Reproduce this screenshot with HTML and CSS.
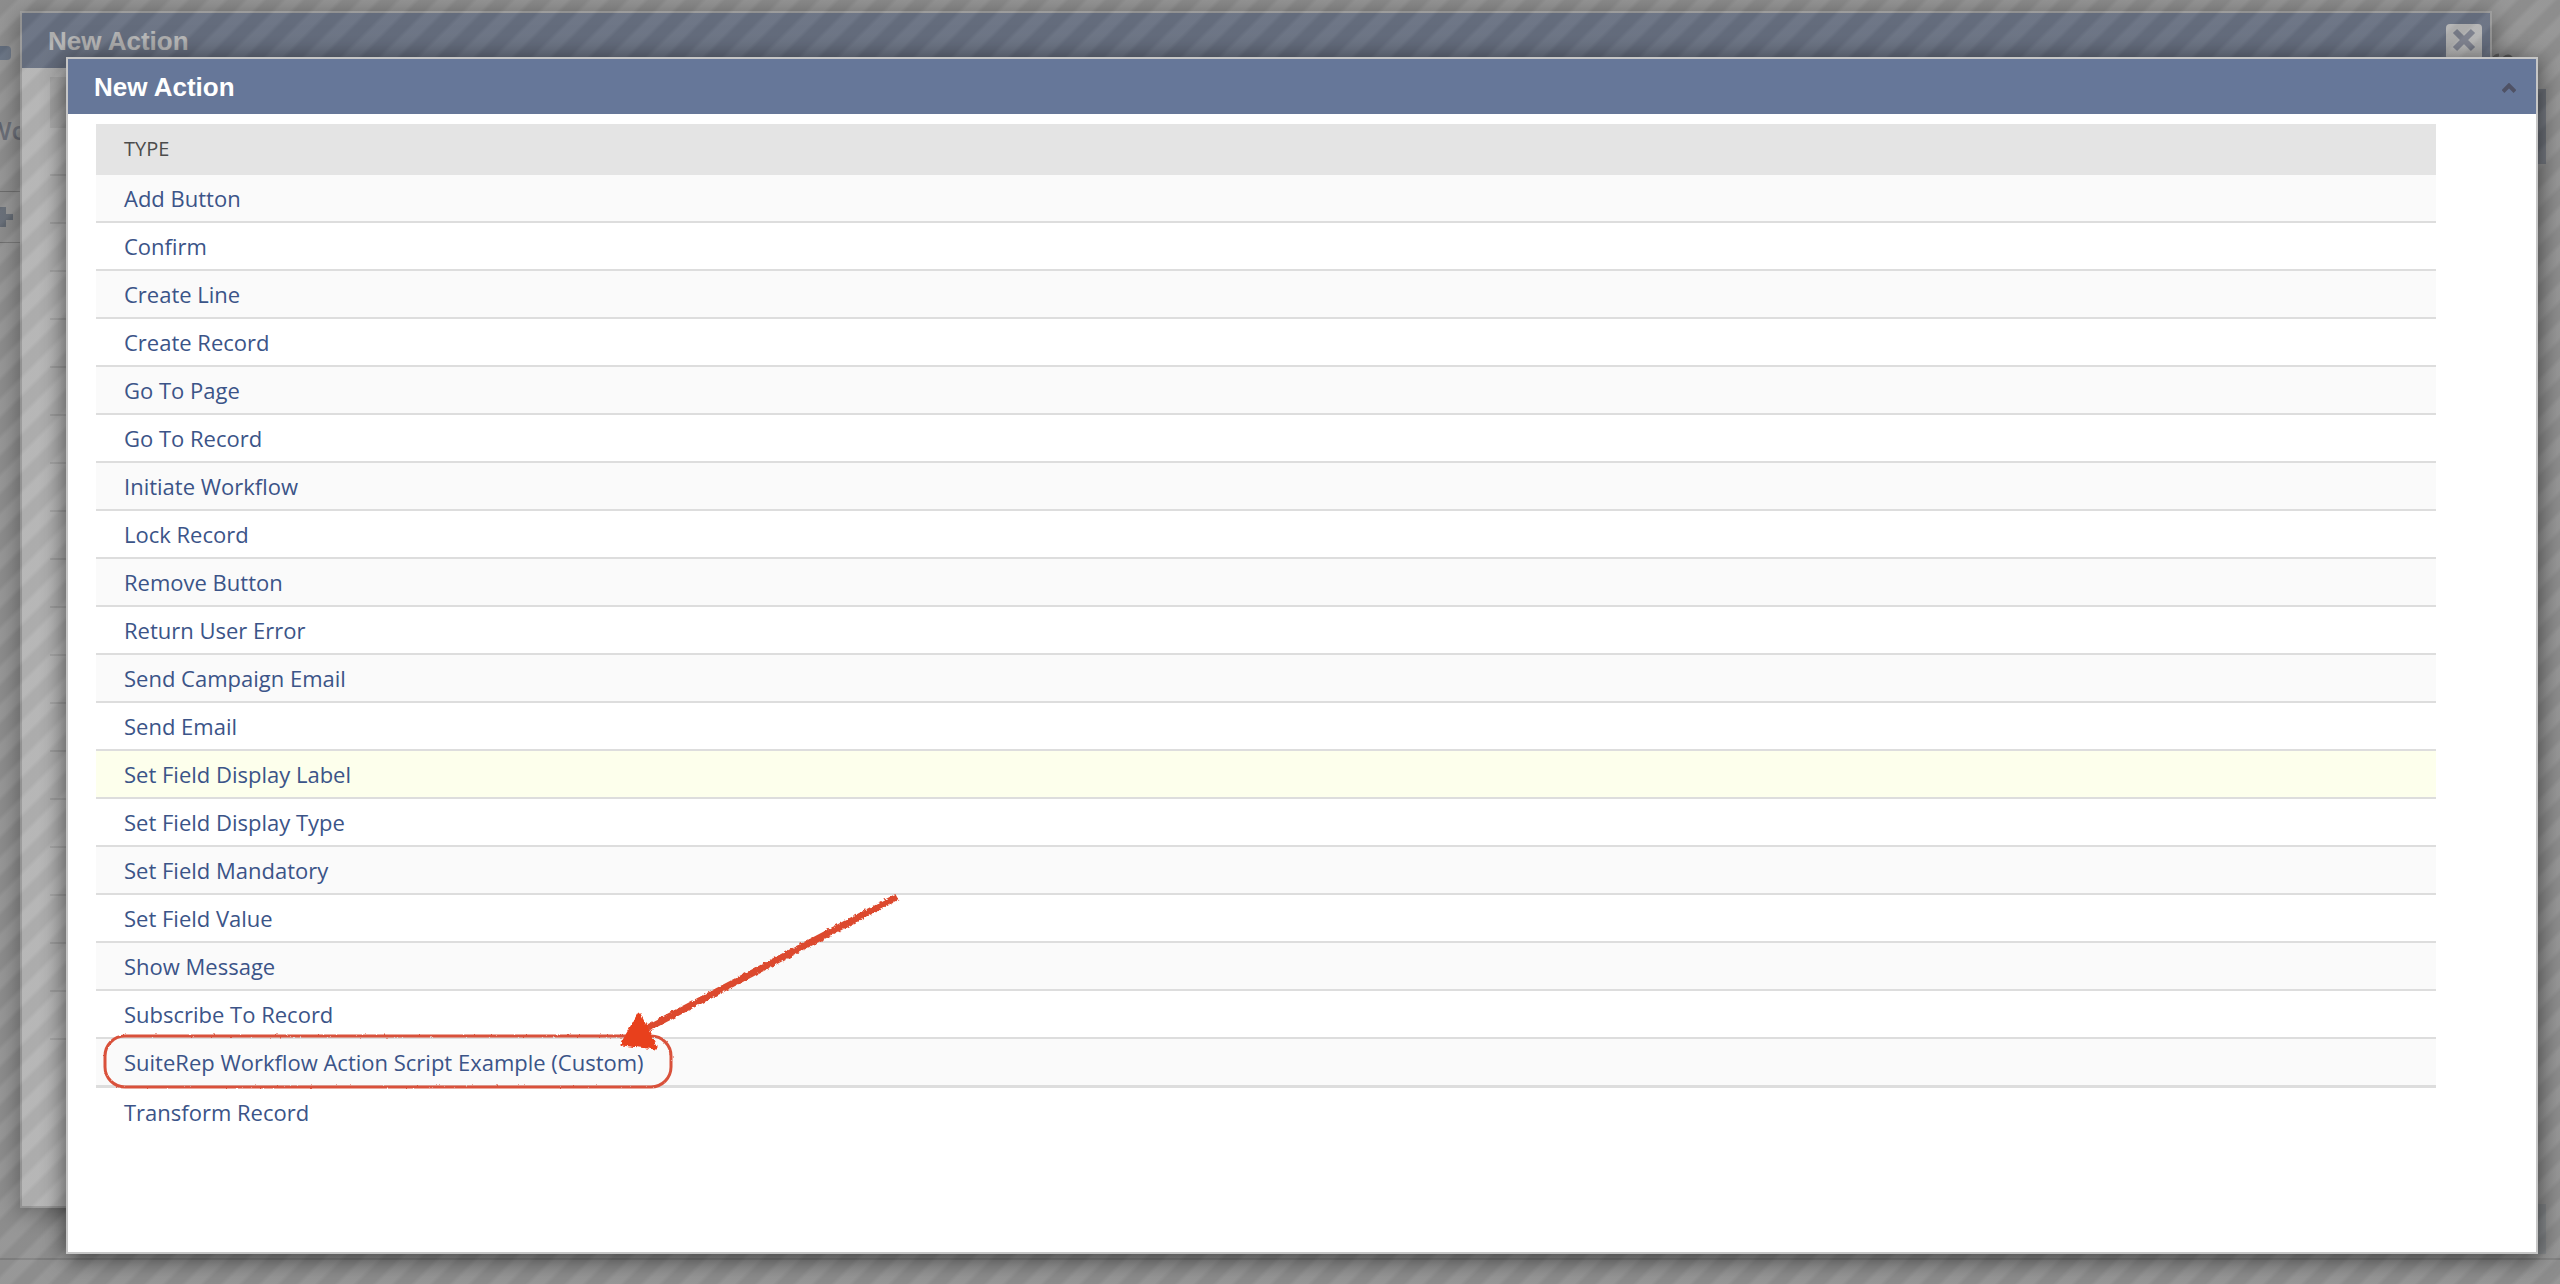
FILE: index.html
```html
<!DOCTYPE html>
<html lang="en">
<head>
    <meta charset="UTF-8">
    <meta name="viewport" content="width=device-width, initial-scale=1.0">
    <title>New Action</title>
    <link rel="stylesheet" href="styles.css">
</head>
<body>
    <!-- page behind the windows -->
    <div class="page">
        <button class="page-button" aria-label="Save"></button>
        <h1 class="page-title">Wo</h1>
        <div class="page-tab">
            <svg width="20" height="20" viewBox="0 0 20 20"><path d="M10 0V20M0 10H20" stroke="#5d6b7f" stroke-width="6"/></svg>
        </div>
        <svg class="page-more" width="20" height="10" viewBox="0 0 20 10"><path d="M1 9V3M1 5q2-3 5-3M9 9q2-6 6-6t4 6" fill="none" stroke="#555" stroke-width="3"/></svg>
        <div class="page-side"></div>
        <div class="page-side page-side-bottom"></div>
        <div class="page-foot"></div>
    </div>

    <div class="window window-back">
        <div class="window-header">
            <h2>New Action</h2>
            <button class="close" aria-label="Close">
                <svg width="24" height="24" viewBox="0 0 24 24"><path d="M3 3L21 21M21 3L3 21" stroke="#8b93ad" stroke-width="6"/></svg>
            </button>
        </div>
        <div class="ghost-list">
            <div class="ghost-head"></div>
            <div class="ghost-rows"></div>
        </div>
    </div>

    <div class="mask"></div>

    <div class="window window-front">
        <div class="window-header">
            <h2>New Action</h2>
            <button class="collapse" aria-label="Collapse">
                <svg width="14" height="10" viewBox="0 0 14 10"><path d="M1 8.500L7 2.500L13 8.500" fill="none" stroke="#4f5265" stroke-width="4"/></svg>
            </button>
        </div>
        <div class="window-body">
            <table class="action-list">
                <thead>
                    <tr><th>TYPE</th></tr>
                </thead>
                <tbody>
                    <tr><td><a href="#">Add Button</a></td></tr>
                    <tr><td><a href="#">Confirm</a></td></tr>
                    <tr><td><a href="#">Create Line</a></td></tr>
                    <tr><td><a href="#">Create Record</a></td></tr>
                    <tr><td><a href="#">Go To Page</a></td></tr>
                    <tr><td><a href="#">Go To Record</a></td></tr>
                    <tr><td><a href="#">Initiate Workflow</a></td></tr>
                    <tr><td><a href="#">Lock Record</a></td></tr>
                    <tr><td><a href="#">Remove Button</a></td></tr>
                    <tr><td><a href="#">Return User Error</a></td></tr>
                    <tr><td><a href="#">Send Campaign Email</a></td></tr>
                    <tr><td><a href="#">Send Email</a></td></tr>
                    <tr class="hover"><td><a href="#">Set Field Display Label</a></td></tr>
                    <tr><td><a href="#">Set Field Display Type</a></td></tr>
                    <tr><td><a href="#">Set Field Mandatory</a></td></tr>
                    <tr><td><a href="#">Set Field Value</a></td></tr>
                    <tr><td><a href="#">Show Message</a></td></tr>
                    <tr><td><a href="#">Subscribe To Record</a></td></tr>
                    <tr class="custom">
                        <td>
                            <a href="#">SuiteRep Workflow Action Script Example (Custom)</a>
                            <svg class="marker" width="820" height="200" viewBox="0 0 820 200">
                                <filter id="crayon" x="0" y="0" width="820" height="200" filterUnits="userSpaceOnUse">
                                    <feTurbulence type="fractalNoise" baseFrequency="0.3" numOctaves="2" seed="4"/>
                                    <feDisplacementMap in="SourceGraphic" scale="4" xChannelSelector="R" yChannelSelector="G"/>
                                </filter>
                                <filter id="pencil" x="0" y="0" width="820" height="200" filterUnits="userSpaceOnUse">
                                    <feTurbulence type="fractalNoise" baseFrequency="0.3" numOctaves="2" seed="4"/>
                                    <feDisplacementMap in="SourceGraphic" scale="2" xChannelSelector="R" yChannelSelector="G"/>
                                </filter>
                                <rect filter="url(#pencil)" x="9" y="143" width="566" height="51" rx="20" fill="none" stroke="#d9513a" stroke-width="3"/>
                                <g filter="url(#crayon)">
                                    <path d="M801 4L548 137" stroke="#dc4a2e" stroke-width="7"/>
                                    <path d="M543 121L526 151L560 155Z" fill="#e8401f" stroke="#e8401f" stroke-width="3" stroke-linejoin="round"/>
                                </g>
                            </svg>
                        </td>
                    </tr>
                    <tr><td><a href="#">Transform Record</a></td></tr>
                </tbody>
            </table>
        </div>
    </div>
</body>
</html>
```
FILE: styles.css
```css
* {
    box-sizing: border-box;
}
body {
    margin: 0;
    height: 100vh;
    overflow: hidden;
    position: relative;
    background-color: #bcbcbc;
    font-family: "Open Sans", sans-serif;
    font-size: 22px;
}
h1, h2 {
    margin: 0;
}
button {
    border: 0;
    padding: 0;
    background: none;
}

/* page */
.page-button {
    position: absolute;
    top: 46px;
    left: -40px;
    width: 51px;
    height: 14px;
    border-radius: 4px;
    background-color: #607799;
}
.page-title {
    position: absolute;
    top: 112px;
    left: -13px;
    font-size: 26px;
    font-weight: 600;
    line-height: 36px;
    color: #5d6579;
}
.page-tab {
    position: absolute;
    top: 191px;
    left: -7px;
    display: flex;
    align-items: center;
    width: 60px;
    height: 52px;
    border-top: 1px solid #777;
    border-bottom: 1px solid #777;
}
.page-more {
    position: absolute;
    top: 53px;
    right: 47px;
}
.page-side {
    position: absolute;
    top: 89px;
    right: 14px;
    width: 20px;
    height: 75px;
    background-color: #767f90;
}
.page-side-bottom {
    top: auto;
    bottom: 30px;
    height: 50px;
    background-color: #a0a7ad;
}
.page-foot {
    position: absolute;
    left: 0;
    right: 0;
    bottom: 24px;
    height: 2px;
    background-color: #999;
}

/* windows */
.window {
    position: absolute;
    border: 2px solid #c6c6c6;
    background-color: #fff;
    box-shadow: 0 4px 24px rgba(0, 0, 0, 0.6);
}
.window-back {
    top: 11px;
    right: 68px;
    bottom: 76px;
    left: 20px;
}
.window-front {
    top: 57px;
    right: 22px;
    bottom: 30px;
    left: 66px;
}
.window-header {
    display: flex;
    align-items: center;
    justify-content: space-between;
    height: 55px;
    padding: 2px 20px 0 26px;
    background-color: #667799;
}
.window-header h2 {
    font-family: "Liberation Sans", Arial, sans-serif;
    font-size: 26px;
    color: #fff;
}
.window-back .window-header {
    padding-right: 8px;
}
.close {
    display: flex;
    justify-content: center;
    width: 36px;
    height: 36px;
    padding-top: 4px;
    border-radius: 4px;
    background-color: #fff;
}
.collapse {
    display: flex;
}
.mask {
    position: absolute;
    inset: 0;
    background: repeating-linear-gradient(135deg, rgba(98, 98, 98, 0.52) 0 10px, rgba(118, 118, 118, 0.52) 14px 23px, rgba(98, 98, 98, 0.52) 27px);
}

/* list hidden under the front window */
.ghost-list {
    padding: 9px 100px 0 28px;
}
.ghost-head {
    height: 51px;
    background-color: #e4e4e4;
}
.ghost-rows {
    height: 914px;
    background: repeating-linear-gradient(#fff 0 46px, #ddd 46px 48px);
}

/* actions */
.window-body {
    padding: 10px 100px 0 28px;
}
.action-list {
    width: 100%;
    border-spacing: 0;
}
.action-list th {
    height: 51px;
    padding: 0 28px 2px;
    background-color: #e4e4e4;
    color: #4c4c4c;
    font-size: 20px;
    font-weight: normal;
    text-align: left;
}
.action-list td {
    height: 48px;
    padding: 0 28px 1px;
    border-bottom: 2px solid #ddd;
}
.action-list tbody tr:nth-child(odd) {
    background-color: #fafafa;
}
.action-list tbody tr.hover {
    background-color: #fdffec;
}
.action-list a {
    color: #3b5488;
    text-decoration: none;
}
.action-list .custom td {
    position: relative;
    height: 49px;
    border-bottom-width: 3px;
}
.action-list tr:last-child td {
    border-bottom: 0;
}
.action-list tbody tr:last-child {
    background-color: #fff;
}
.marker {
    position: absolute;
    left: 0;
    bottom: -8px;
    pointer-events: none;
}
```
